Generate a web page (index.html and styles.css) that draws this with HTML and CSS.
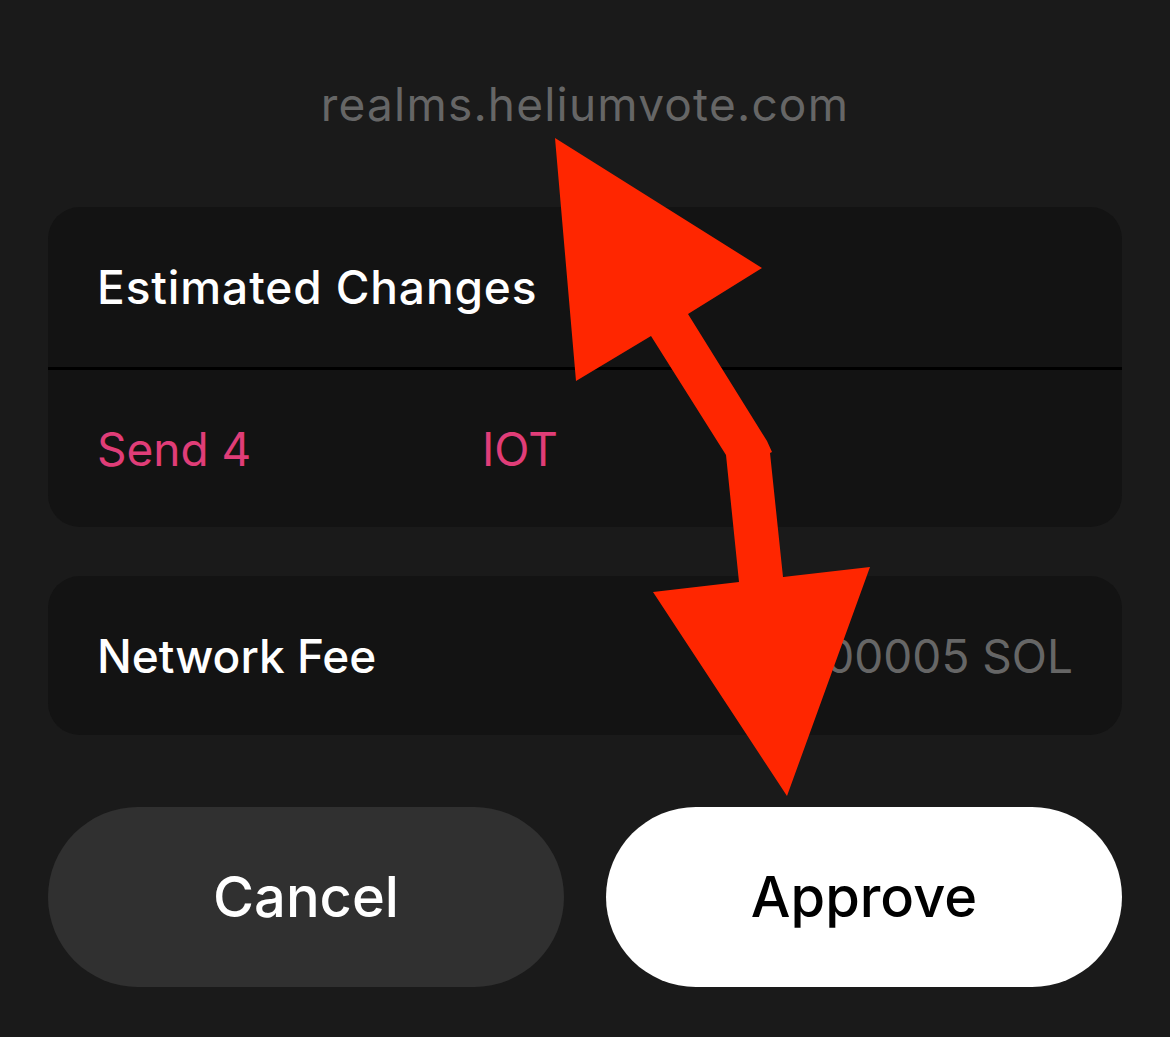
FILE: index.html
```html
<!DOCTYPE html>
<html>
<head>
<meta charset="utf-8">
<link rel="stylesheet" href="styles.css">
</head>
<body>
<div class="page">
  <div class="origin">realms.heliumvote.com</div>
  <section class="card">
    <div class="card-row card-head">Estimated Changes</div>
    <div class="divider"></div>
    <div class="card-row change">
      <span class="send">Send 4</span>
      <span class="token">IOT</span>
    </div>
  </section>
  <section class="card fee">
    <div class="card-row fee-row">
      <span class="fee-label">Network Fee</span>
      <span class="fee-value">0.000005 SOL</span>
    </div>
  </section>
  <div class="actions">
    <button class="btn btn-cancel">Cancel</button>
    <button class="btn btn-approve">Approve</button>
  </div>
  <svg class="annotation" width="1170" height="1037" viewBox="0 0 1170 1037">
    <polygon fill="#ff2600" points="555,138 762,268 688,314 767,441 772,452 770,453 783,577 870,567 787,796 653,592 739,582 726,455 651,336 576,381"/>
  </svg>
</div>
</body>
</html>
```
FILE: styles.css
```css
html, body {
  margin: 0;
  padding: 0;
  background: #1a1a1a;
}
.page {
  position: relative;
  width: 1170px;
  height: 1037px;
  box-sizing: border-box;
  padding: 0 48px;
  font-family: Inter, "Noto Sans", sans-serif;
  overflow: hidden;
}
.origin {
  padding-top: 74px;
  height: 60px;
  line-height: 60px;
  margin-bottom: 73px;
  text-align: center;
  color: #666666;
  font-size: 46px;
  font-weight: 400;
  letter-spacing: 1.2px;
}
.card {
  background: #131313;
  border-radius: 32px;
  overflow: hidden;
}
.card-row {
  display: flex;
  align-items: center;
  padding: 0 49px;
  font-size: 46px;
}
.card-head {
  height: 160px;
  color: #ffffff;
  font-weight: 500;
  letter-spacing: 0.9px;
}
.divider {
  height: 3px;
  background: #000000;
}
.change {
  height: 157px;
  color: #e03d78;
  font-weight: 400;
}
.send {
  width: 385px;
}
.fee {
  margin-top: 49px;
}
.fee-row {
  height: 159px;
  justify-content: space-between;
}
.fee-label {
  color: #ffffff;
  font-weight: 500;
}
.fee-value {
  color: #666666;
  font-weight: 400;
}
.actions {
  margin-top: 72px;
  display: grid;
  grid-template-columns: 1fr 1fr;
  gap: 42px;
}
.btn {
  height: 180px;
  border: none;
  border-radius: 90px;
  font-family: Inter, "Noto Sans", sans-serif;
  font-size: 56px;
  font-weight: 500;
}
.btn-cancel {
  background: #303030;
  color: #ffffff;
}
.btn-approve {
  background: #ffffff;
  color: #000000;
}
.annotation {
  position: absolute;
  left: 0;
  top: 0;
  pointer-events: none;
}
```
